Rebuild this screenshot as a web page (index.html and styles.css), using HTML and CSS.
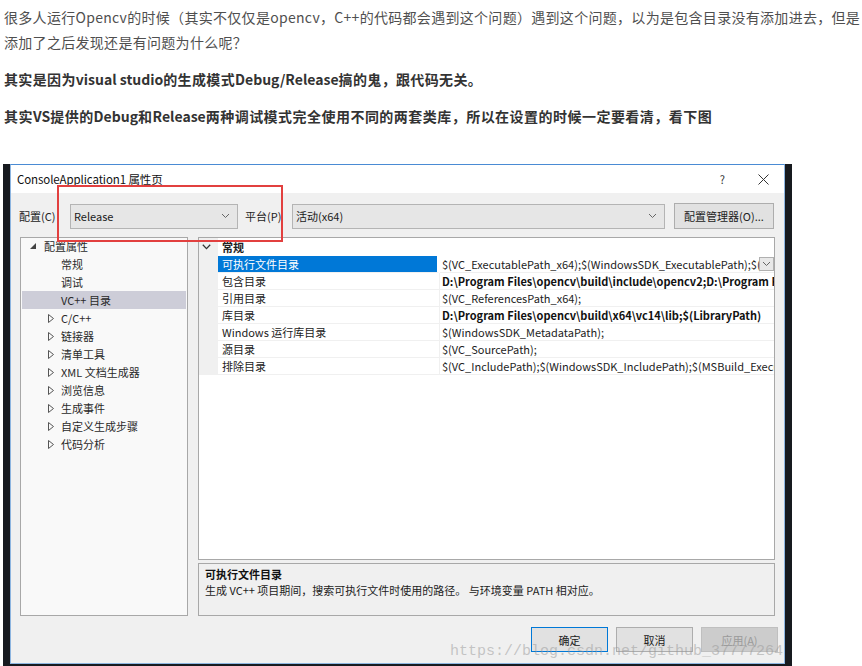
FILE: index.html
```html
<!DOCTYPE html>
<html lang="zh-CN">
<head>
<meta charset="utf-8">
<title>VS Debug/Release</title>
<link rel="stylesheet" href="styles.css">
</head>
<body>
<div class="article">
  <p class="para">很多人运行Opencv的时候（其实不仅仅是opencv，C++的代码都会遇到这个问题）遇到这个问题，以为是包含目录没有添加进去，但是<br>添加了之后发现还是有问题为什么呢？</p>
  <p class="para strong">其实是因为<span class="lat">visual studio</span>的生成模式<span class="lat">Debug/Release</span>搞的鬼，跟代码无关。</p>
  <p class="para strong strong-wide">其实<span class="lat">VS</span>提供的<span class="lat">Debug</span>和<span class="lat">Release</span>两种调试模式完全使用不同的两套类库，所以在设置的时候一定要看清，看下图</p>

  <div class="shot">
    <div class="dialog">
      <div class="titlebar">
        <span class="title">ConsoleApplication1 属性页</span>
        <span class="help">?</span>
        <svg class="close" width="11" height="11" viewBox="0 0 11 11"><path d="M0.5 0.5l10 10M10.5 0.5l-10 10" stroke="#333" stroke-width="1" fill="none"/></svg>
      </div>
      <div class="dbody">
        <div class="toolbar">
          <span class="lbl lbl-cfg">配置(C)</span>
          <div class="combo combo-cfg"><span>Release</span><svg class="chev" width="9" height="6" viewBox="0 0 9 6"><path d="M1 1l3.5 3.5L8 1" fill="none" stroke="#666" stroke-width="1"/></svg></div>
          <span class="lbl lbl-plat">平台(P)</span>
          <div class="combo combo-plat"><span>活动(x64)</span><svg class="chev" width="9" height="6" viewBox="0 0 9 6"><path d="M1 1l3.5 3.5L8 1" fill="none" stroke="#666" stroke-width="1"/></svg></div>
          <div class="btn btn-mgr">配置管理器(O)...</div>
        </div>

        <div class="panes">
          <div class="tree">
            <div class="trow lvl0"><svg class="tri" width="6" height="6" viewBox="0 0 6 6"><path d="M6 0V6H0Z" fill="#444"/></svg><span>配置属性</span></div>
            <div class="trow leaf"><span>常规</span></div>
            <div class="trow leaf"><span>调试</span></div>
            <div class="trow leaf sel"><span>VC++ 目录</span></div>
            <div class="trow node"><svg class="tri" width="6" height="9" viewBox="0 0 6 9"><path d="M0.5 0.5L5.5 4.5L0.5 8.5Z" fill="none" stroke="#555"/></svg><span>C/C++</span></div>
            <div class="trow node"><svg class="tri" width="6" height="9" viewBox="0 0 6 9"><path d="M0.5 0.5L5.5 4.5L0.5 8.5Z" fill="none" stroke="#555"/></svg><span>链接器</span></div>
            <div class="trow node"><svg class="tri" width="6" height="9" viewBox="0 0 6 9"><path d="M0.5 0.5L5.5 4.5L0.5 8.5Z" fill="none" stroke="#555"/></svg><span>清单工具</span></div>
            <div class="trow node"><svg class="tri" width="6" height="9" viewBox="0 0 6 9"><path d="M0.5 0.5L5.5 4.5L0.5 8.5Z" fill="none" stroke="#555"/></svg><span>XML 文档生成器</span></div>
            <div class="trow node"><svg class="tri" width="6" height="9" viewBox="0 0 6 9"><path d="M0.5 0.5L5.5 4.5L0.5 8.5Z" fill="none" stroke="#555"/></svg><span>浏览信息</span></div>
            <div class="trow node"><svg class="tri" width="6" height="9" viewBox="0 0 6 9"><path d="M0.5 0.5L5.5 4.5L0.5 8.5Z" fill="none" stroke="#555"/></svg><span>生成事件</span></div>
            <div class="trow node"><svg class="tri" width="6" height="9" viewBox="0 0 6 9"><path d="M0.5 0.5L5.5 4.5L0.5 8.5Z" fill="none" stroke="#555"/></svg><span>自定义生成步骤</span></div>
            <div class="trow node"><svg class="tri" width="6" height="9" viewBox="0 0 6 9"><path d="M0.5 0.5L5.5 4.5L0.5 8.5Z" fill="none" stroke="#555"/></svg><span>代码分析</span></div>
          </div>

          <div class="rightcol">
            <div class="grid">
              <div class="ghead">
                <div class="gutter"><svg width="9" height="6" viewBox="0 0 9 6"><path d="M0.8 0.8l3.7 3.8L8.2 0.8" fill="none" stroke="#333" stroke-width="1.3"/></svg></div>
                <div class="gtitle">常规</div>
              </div>
              <div class="grow">
                <div class="gutter"></div>
                <div class="gname selname">可执行文件目录</div>
                <div class="gval">$(VC_ExecutablePath_x64);$(WindowsSDK_ExecutablePath);$(VS_ExecutablePath)<span class="ddbtn"><svg width="9" height="6" viewBox="0 0 9 6"><path d="M1 1l3.5 3.5L8 1" fill="none" stroke="#666" stroke-width="1"/></svg></span></div>
              </div>
              <div class="grow">
                <div class="gutter"></div>
                <div class="gname">包含目录</div>
                <div class="gval bold">D:\Program Files\opencv\build\include\opencv2;D:\Program Files\opencv\build\include;$(IncludePath)</div>
              </div>
              <div class="grow">
                <div class="gutter"></div>
                <div class="gname">引用目录</div>
                <div class="gval">$(VC_ReferencesPath_x64);</div>
              </div>
              <div class="grow">
                <div class="gutter"></div>
                <div class="gname">库目录</div>
                <div class="gval bold">D:\Program Files\opencv\build\x64\vc14\lib;$(LibraryPath)</div>
              </div>
              <div class="grow">
                <div class="gutter"></div>
                <div class="gname">Windows 运行库目录</div>
                <div class="gval">$(WindowsSDK_MetadataPath);</div>
              </div>
              <div class="grow">
                <div class="gutter"></div>
                <div class="gname">源目录</div>
                <div class="gval">$(VC_SourcePath);</div>
              </div>
              <div class="grow">
                <div class="gutter"></div>
                <div class="gname">排除目录</div>
                <div class="gval">$(VC_IncludePath);$(WindowsSDK_IncludePath);$(MSBuild_ExecutablePath)</div>
              </div>
            </div>
            <div class="desc">
              <div class="desc-title">可执行文件目录</div>
              <div class="desc-text">生成 VC++ 项目期间，搜索可执行文件时使用的路径。 与环境变量 PATH 相对应。</div>
            </div>
          </div>
        </div>

        <div class="buttons">
          <div class="btn dbtn btn-ok">确定</div>
          <div class="btn dbtn">取消</div>
          <div class="btn dbtn btn-off">应用(A)</div>
        </div>
      </div>

      <div class="redbox"></div>
      <div class="watermark">https://blog.csdn.net/github_37777264</div>
    </div>
  </div>
</div>
</body>
</html>
```

FILE: styles.css
```css
* { box-sizing: border-box; }
html, body { margin: 0; padding: 0; background: #fff; }
body { font-family: "Noto Sans CJK SC", "Noto Sans", sans-serif; }

.article { padding: 5px 0 0 4px; }
.para {
  margin: 0 0 12px;
  font-size: 14px;
  line-height: 25px;
  color: #4f4f4f;
  white-space: nowrap;
  letter-spacing: 0.3px;
}
.strong { font-weight: bold; color: #333; letter-spacing: 0.35px; }
.strong-wide { letter-spacing: 0.47px; }
.lat { letter-spacing: 0; }

/* screenshot frame */
.shot {
  margin: 35px 0 0 -1px;
  width: 789px;
  height: 502px;
  background: #171a1f;
  padding: 0 7px 2px 7px;
  display: flex;
}
.dialog {
  position: relative;
  width: 775px;
  height: 500px;
  border: 1px solid #8db5e0;
  border-top-color: #4a8bd4;
  background: #f0f0f0;
  display: flex;
  flex-direction: column;
  font-size: 11px;
  color: #1a1a1a;
  overflow: hidden;
}
.titlebar {
  height: 28px;
  flex: none;
  background: #fff;
  display: flex;
  align-items: center;
  padding: 0 15px 0 6px;
}
.title { font-size: 11.5px; color: #111; letter-spacing: -0.1px; }
.help { margin-left: auto; font-size: 11px; color: #333; }
.close { margin-left: 33px; }

.dbody {
  flex: 1;
  display: flex;
  flex-direction: column;
  padding: 10px 9px 11px 9px;
}
.toolbar {
  height: 26px;
  display: flex;
  align-items: center;
}
.lbl { font-size: 11px; color: #222; }
.lbl-cfg { width: 51px; margin-left: -1px; }
.lbl-plat { width: 47px; margin-left: 7px; }
.combo {
  height: 25px;
  background: #e6e6e6;
  border: 1px solid #b4b4b4;
  display: flex;
  align-items: center;
  justify-content: space-between;
  padding: 0 7px 0 3px;
  font-size: 11px;
}
.combo-cfg { width: 168px; }
.combo-plat { width: 373px; }
.btn {
  display: flex;
  align-items: center;
  justify-content: center;
  background: #e1e1e1;
  border: 1px solid #adadad;
  font-size: 11px;
  color: #222;
}
.btn-mgr { width: 100px; height: 26px; margin-left: 9px; }

.panes {
  margin-top: 8px;
  height: 379px;
  display: flex;
  gap: 10px;
}
.tree {
  width: 168px;
  flex: none;
  border: 1px solid #a8a8a8;
  background: #f9f9f9;
}
.trow {
  height: 18px;
  display: flex;
  align-items: center;
  color: #2a2a2a;
  margin: 0 1px;
}
.trow:first-child { margin-top: -1px; }
.lvl0 { padding-left: 8px; }
.lvl0 .tri { margin-right: 8px; margin-top: -1px; }
.leaf { padding-left: 39px; }
.node { padding-left: 26px; }
.node .tri { margin-right: 7px; }
.sel { background: #cdcdd8; }

.rightcol {
  flex: 1;
  display: flex;
  flex-direction: column;
  gap: 3px;
}
.grid {
  height: 323px;
  flex: none;
  border: 1px solid #a8a8a8;
  background: #fff;
}
.ghead, .grow {
  display: grid;
  grid-template-columns: 19px 222px 1fr;
}
.ghead { height: 18px; grid-template-columns: 19px 1fr; }
.grow { height: 17px; }
.gutter {
  background: #f0f0f0;
  display: flex;
  align-items: center;
  justify-content: center;
  padding-right: 5px;
}
.gtitle {
  font-weight: bold;
  padding-left: 4px;
  display: flex;
  align-items: center;
  color: #222;
}
.gname {
  padding-left: 4px;
  display: flex;
  align-items: center;
  border-bottom: 1px solid #f0f0f0;
  border-right: 1px solid #f0f0f0;
  white-space: nowrap;
  color: #222;
}
.selname {
  background: #0078d7;
  color: #fff;
  border-right: 3px solid #fff;
}
.gval {
  position: relative;
  padding-left: 2px;
  display: flex;
  align-items: center;
  border-bottom: 1px solid #f0f0f0;
  white-space: nowrap;
  overflow: hidden;
  color: #222;
}
.bold { font-weight: bold; color: #111; }
.ddbtn {
  position: absolute;
  right: 0;
  top: 1px;
  width: 15px;
  height: 14px;
  background: #e8e8e8;
  border: 1px solid #b0b0b0;
  display: flex;
  align-items: center;
  justify-content: center;
}
.desc {
  flex: 1;
  border: 1px solid #a8a8a8;
  background: #f0f0f0;
  padding: 2px 6px;
  line-height: 16px;
}
.desc-title { font-weight: bold; color: #111; }
.desc-text { color: #222; }

.buttons {
  margin-top: 11px;
  margin-right: -3px;
  display: flex;
  justify-content: flex-end;
  gap: 8px;
}
.dbtn { width: 77px; height: 25px; }
.btn-ok { border-color: #0078d7; }
.btn-off { background: #cccccc; border-color: #bfbfbf; color: #9a9a9a; }

.redbox {
  position: absolute;
  left: 46px;
  top: 20px;
  width: 226px;
  height: 57px;
  border: 2px solid #e2403f;
}
.watermark {
  position: absolute;
  left: 439px;
  top: 478px;
  font-family: "Liberation Mono", monospace;
  font-size: 15px;
  color: rgba(150, 150, 150, 0.5);
  white-space: nowrap;
  pointer-events: none;
}
```
